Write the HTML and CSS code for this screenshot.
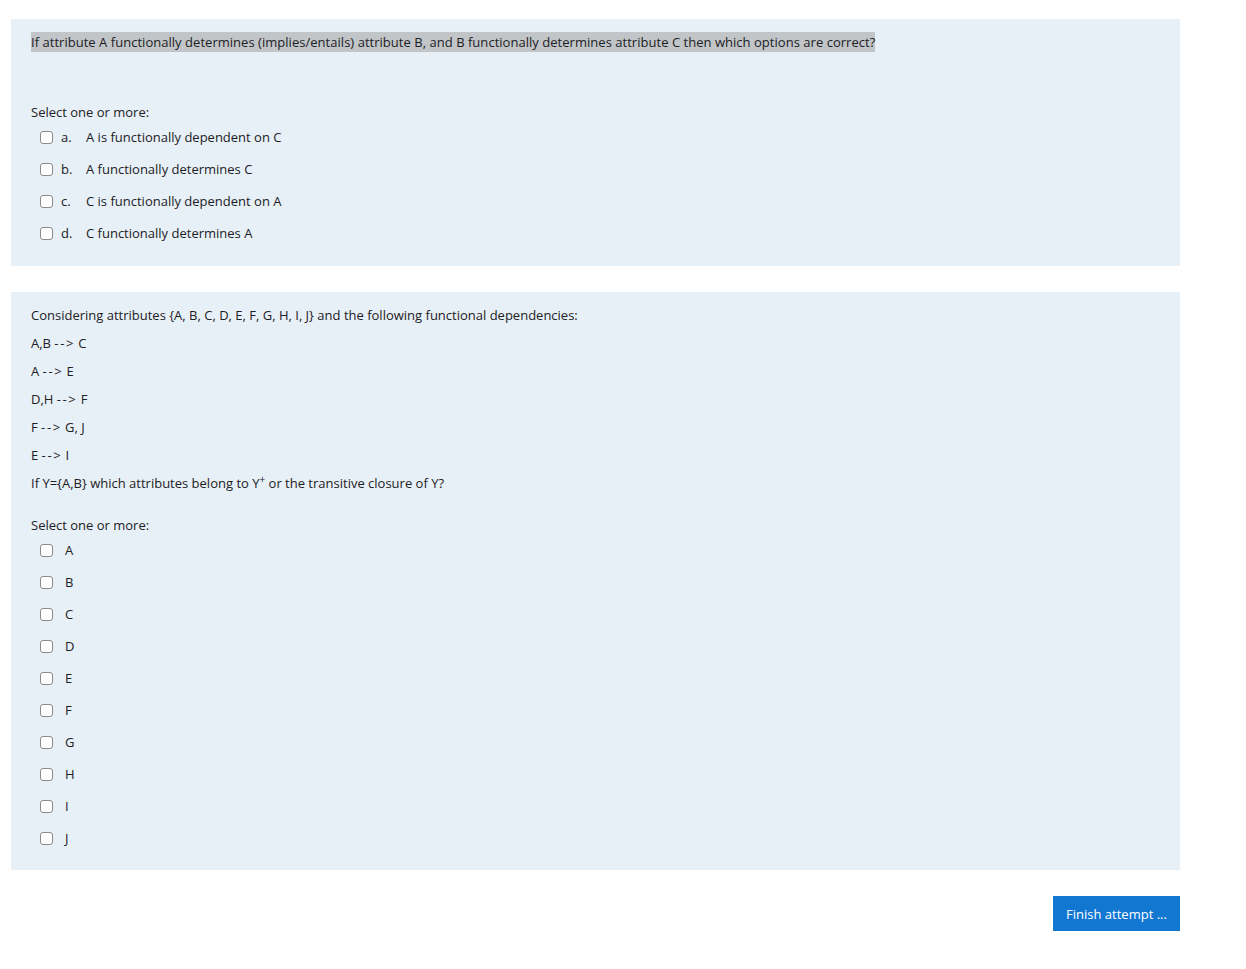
FILE: index.html
```html
<!DOCTYPE html>
<html>
<head>
<meta charset="utf-8">
<link rel="stylesheet" href="styles.css">
</head>
<body>
<div class="page">
  <div class="card card1">
    <div class="qtext"><span class="hl">If attribute A functionally determines (implies/entails) attribute B, and B functionally determines attribute C then which options are correct?</span></div>
    <div class="prompt">Select one or more:</div>
    <div class="answers">
      <label class="opt"><span class="cb"></span><span class="num">a.</span><span>A is functionally dependent on C</span></label>
      <label class="opt"><span class="cb"></span><span class="num">b.</span><span>A functionally determines C</span></label>
      <label class="opt"><span class="cb"></span><span class="num">c.</span><span>C is functionally dependent on A</span></label>
      <label class="opt"><span class="cb"></span><span class="num">d.</span><span>C functionally determines A</span></label>
    </div>
  </div>
  <div class="card card2">
    <div class="lines">
      <p>Considering attributes {A, B, C, D, E, F, G, H, I, J} and the following functional dependencies:</p>
      <p>A,B <span class="arr">--&gt;</span> C</p>
      <p>A <span class="arr">--&gt;</span> E</p>
      <p>D,H <span class="arr">--&gt;</span> F</p>
      <p>F <span class="arr">--&gt;</span> G, J</p>
      <p>E <span class="arr">--&gt;</span> I</p>
      <p>If Y={A,B} which attributes belong to Y<sup>+</sup> or the transitive closure of Y?</p>
    </div>
    <div class="prompt p2">Select one or more:</div>
    <div class="answers">
      <label class="opt"><span class="cb"></span><span class="let">A</span></label>
      <label class="opt"><span class="cb"></span><span class="let">B</span></label>
      <label class="opt"><span class="cb"></span><span class="let">C</span></label>
      <label class="opt"><span class="cb"></span><span class="let">D</span></label>
      <label class="opt"><span class="cb"></span><span class="let">E</span></label>
      <label class="opt"><span class="cb"></span><span class="let">F</span></label>
      <label class="opt"><span class="cb"></span><span class="let">G</span></label>
      <label class="opt"><span class="cb"></span><span class="let">H</span></label>
      <label class="opt"><span class="cb"></span><span class="let">I</span></label>
      <label class="opt"><span class="cb"></span><span class="let">J</span></label>
    </div>
  </div>
  <div class="actions">
    <button class="finish">Finish attempt ...</button>
  </div>
</div>
</body>
</html>
```
FILE: styles.css
```css
html, body {
  margin: 0;
  padding: 0;
  background: #ffffff;
}
body {
  font-family: "Open Sans", "Noto Sans", sans-serif;
  font-size: 13px;
  color: #1d2125;
}
.page {
  width: 1169px;
  padding: 19px 0 0 11px;
}
.card {
  background: #e7f0f7;
  padding: 0 20px;
}
.card1 {
  padding-top: 13px;
  padding-bottom: 17px;
}
.qtext {
  line-height: 20px;
  letter-spacing: 0.03px;
}
.hl {
  background: #c1c5c8;
  padding: 1px 0 1px;
}
.prompt {
  line-height: 20px;
  margin-top: 50px;
}
.answers {
  display: flex;
  flex-direction: column;
  padding-left: 9px;
  margin-top: -1px;
}
.opt {
  display: flex;
  align-items: center;
  height: 32px;
}
.cb {
  width: 11px;
  height: 11px;
  border: 1px solid #8a8a8a;
  border-radius: 3px;
  background: #fff;
  margin-right: 8px;
  flex: none;
}
.num {
  width: 25px;
}
.let {
  padding-left: 4px;
}
.card2 {
  margin-top: 26px;
  padding-top: 13px;
  padding-bottom: 16px;
}
.lines p {
  margin: 0 0 8px;
  line-height: 20px;
}
.arr {
  letter-spacing: 1.6px;
}
sup {
  font-size: 10px;
  line-height: 0;
}
.p2 {
  margin-top: 22px;
}
.actions {
  display: flex;
  justify-content: flex-end;
  margin-top: 26px;
}
.finish {
  background: #1177d1;
  color: #fff;
  border: none;
  font-family: inherit;
  font-size: 13px;
  width: 127px;
  height: 35px;
  padding: 0;
}
```
